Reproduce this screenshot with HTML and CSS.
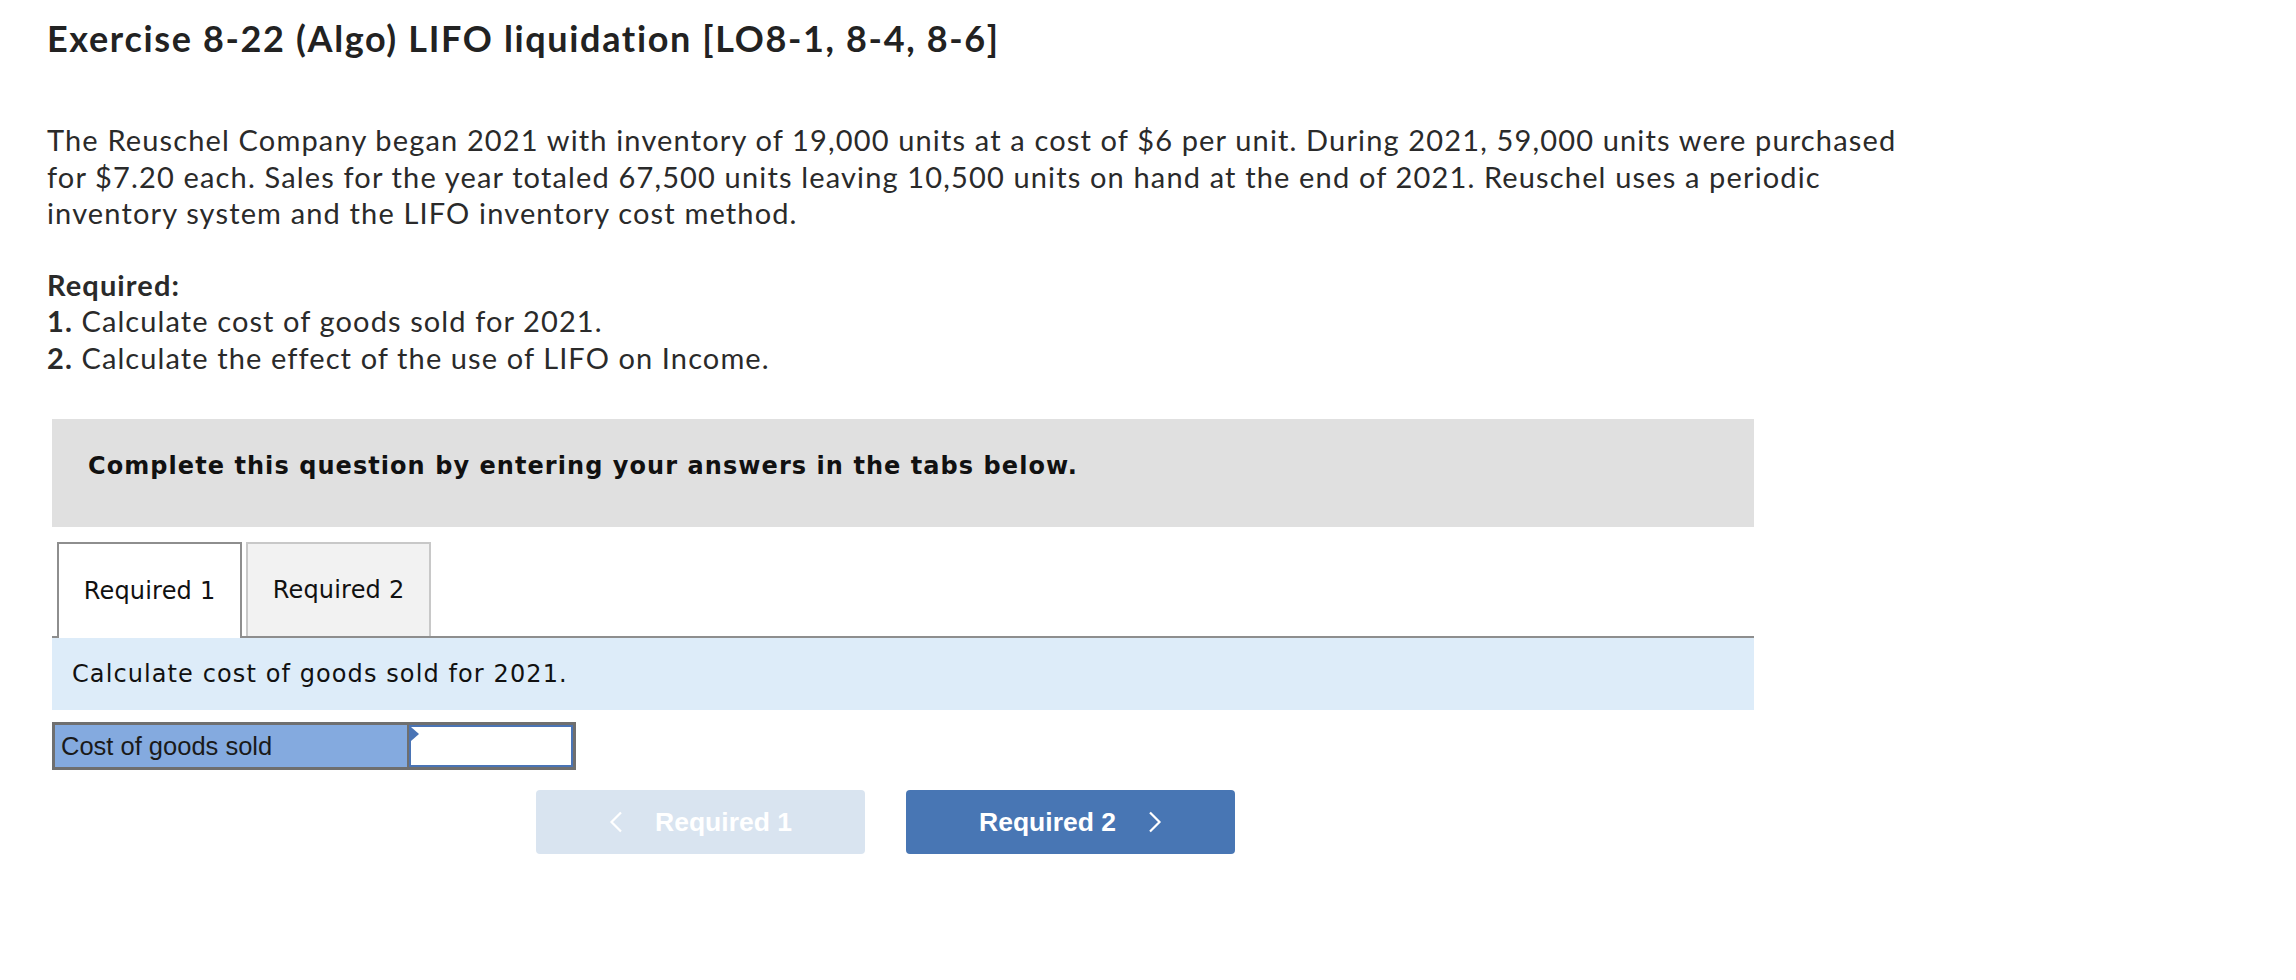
FILE: index.html
```html
<!DOCTYPE html>
<html>
<head>
<meta charset="utf-8">
<link rel="stylesheet" href="styles.css">
</head>
<body>
<div class="page">
  <h1 class="title">Exercise 8-22 (Algo) LIFO liquidation [LO8-1, 8-4, 8-6]</h1>
  <p class="intro">The Reuschel Company began 2021 with inventory of 19,000 units at a cost of $6 per unit. During 2021, 59,000 units were purchased for $7.20 each. Sales for the year totaled 67,500 units leaving 10,500 units on hand at the end of 2021. Reuschel uses a periodic inventory system and the LIFO inventory cost method.</p>
  <div class="required">
    <div class="req-head">Required:</div>
    <div><b>1.</b> Calculate cost of goods sold for 2021.</div>
    <div><b>2.</b> Calculate the effect of the use of LIFO on Income.</div>
  </div>
  <div class="notice">Complete this question by entering your answers in the tabs below.</div>
  <div class="tabs">
    <div class="tab tab-active">Required 1</div>
    <div class="tab tab-idle">Required 2</div>
  </div>
  <div class="tab-rule"></div>
  <div class="instruction">Calculate cost of goods sold for 2021.</div>
  <div class="answer-row">
    <div class="answer-label">Cost of goods sold</div>
    <div class="answer-input"><span class="marker"></span></div>
  </div>
  <div class="nav">
    <button class="nav-btn nav-prev">
      <svg class="chev" width="14" height="22" viewBox="0 0 14 22"><polyline points="12,1.5 2.5,11 12,20.5" fill="none" stroke="#ffffff" stroke-width="2.2"/></svg>
      <span>Required 1</span>
    </button>
    <button class="nav-btn nav-next">
      <span>Required 2</span>
      <svg class="chev" width="14" height="22" viewBox="0 0 14 22"><polyline points="2,1.5 11.5,11 2,20.5" fill="none" stroke="#ffffff" stroke-width="2.2"/></svg>
    </button>
  </div>
</div>
</body>
</html>
```
FILE: styles.css
```css
html, body {
  margin: 0;
  padding: 0;
  background: #ffffff;
}
.page {
  padding: 16px 0 0 47px;
  width: 1900px;
  font-family: Lato, "Noto Sans", sans-serif;
  color: #2a2a2a;
}
.title {
  margin: 0;
  font-size: 36px;
  line-height: 44px;
  font-weight: 700;
  letter-spacing: 1.65px;
  color: #222222;
}
.intro {
  margin: 62px 0 0 0;
  font-size: 29px;
  line-height: 36.5px;
  letter-spacing: 1.15px;
  width: 1880px;
}
.required {
  margin-top: 35px;
  font-size: 29px;
  line-height: 36.5px;
  letter-spacing: 1.1px;
}
.req-head {
  font-weight: 700;
}
.required b {
  font-weight: 700;
}
.notice {
  margin: 43px 0 0 5px;
  width: 1702px;
  box-sizing: border-box;
  height: 108px;
  background: #e0e0e0;
  padding: 31px 36px 0 36px;
  font-family: "DejaVu Sans", Verdana, sans-serif;
  font-weight: 700;
  font-size: 24px;
  line-height: 32px;
  letter-spacing: 1.06px;
  color: #111111;
}
.tabs {
  display: flex;
  gap: 4px;
  margin: 15px 0 0 10px;
  position: relative;
  z-index: 1;
}
.tab {
  box-sizing: border-box;
  width: 185px;
  height: 96px;
  display: flex;
  align-items: center;
  justify-content: center;
  font-family: "DejaVu Sans", Verdana, sans-serif;
  font-size: 24px;
  letter-spacing: 0.2px;
  color: #111111;
}
.tab-active {
  background: #ffffff;
  border: 2px solid #8e8e8e;
  border-bottom: 0;
}
.tab-idle {
  background: #f2f2f2;
  border: 2px solid #c8c8c8;
  border-bottom: 0;
  height: 94px;
}
.tab-rule {
  margin: -2px 0 0 5px;
  width: 1702px;
  height: 2px;
  background: #8e8e8e;
}
.instruction {
  margin-left: 5px;
  width: 1702px;
  height: 72px;
  box-sizing: border-box;
  background: #ddecf9;
  padding: 0 20px;
  display: flex;
  align-items: center;
  font-family: "DejaVu Sans", Verdana, sans-serif;
  font-size: 24px;
  letter-spacing: 1.1px;
  color: #111111;
}
.answer-row {
  margin: 12px 0 0 5px;
  display: flex;
  width: 524px;
  height: 48px;
  box-sizing: border-box;
  border: 3px solid #6f6f6f;
}
.answer-label {
  width: 354px;
  box-sizing: border-box;
  background: #84aadf;
  border-right: 2px solid #6f6f6f;
  padding-left: 6px;
  display: flex;
  align-items: center;
  font-family: "Liberation Sans", Arial, sans-serif;
  font-size: 25.5px;
  color: #1a1a1a;
}
.answer-input {
  flex: 1;
  background: #ffffff;
  border: 2px solid #4a74b5;
  position: relative;
}
.marker {
  position: absolute;
  left: 0;
  top: 0;
  width: 0;
  height: 0;
  border-top: 7px solid transparent;
  border-bottom: 7px solid transparent;
  border-left: 8px solid #4a74b5;
}
.nav {
  display: flex;
  gap: 41px;
  margin: 20px 0 0 489px;
}
.nav-btn {
  width: 329px;
  height: 64px;
  border: 0;
  border-radius: 4px;
  display: flex;
  align-items: center;
  justify-content: center;
  gap: 32px;
  font-family: "Liberation Sans", Arial, sans-serif;
  font-weight: 700;
  font-size: 26.5px;
  color: #ffffff;
  padding: 0;
}
.nav-prev {
  background: #d9e4f0;
}
.nav-next {
  background: #4876b4;
}
.chev {
  display: block;
  flex: none;
}
```
